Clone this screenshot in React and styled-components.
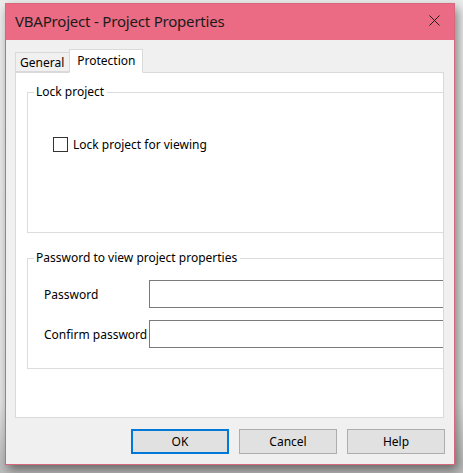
import styled, { createGlobalStyle } from 'styled-components'

const Global = createGlobalStyle`
  html, body {
    margin: 0;
    padding: 0;
    background: #e9e9e9;
    font-family: "Noto Sans", "Open Sans", sans-serif;
  }
`

const Page = styled.div`
  width: 463px;
  height: 473px;
  overflow: hidden;
  padding: 3px 0 0 5px;
  box-sizing: border-box;
  background: linear-gradient(to bottom, #ececec 0%, #e4e4e4 85%, #bcbcbc 98%);
`

const Window = styled.div`
  width: 448px;
  display: flex;
  flex-direction: column;
  background: #f0f0f0;
  border: 1px solid #d6667c;
  box-shadow: 3px 5px 10px rgba(0, 0, 0, 0.45);
`

const TitleBar = styled.div`
  height: 36px;
  background: #ea6b83;
  display: flex;
  align-items: center;
  justify-content: space-between;
  padding: 0 14px 0 9px;
`

const Title = styled.div`
  font-size: 15px;
  letter-spacing: -0.2px;
  color: #1b1b1b;
  margin-top: -3px;
`

const Close = styled.svg`
  width: 11px;
  height: 11px;
  margin-top: -4px;
`

const Body = styled.div`
  padding: 9px 10px 10px 9px;
  display: flex;
  flex-direction: column;
`

const Tabs = styled.div`
  display: flex;
  align-items: flex-end;
  height: 24px;
  margin-bottom: -1px;
  position: relative;
  z-index: 1;
`

const Tab = styled.div`
  box-sizing: border-box;
  height: ${p => (p.active ? '24px' : '20px')};
  padding: ${p => (p.active ? '2px 7px 0 7px' : '1px 5px 0 4px')};
  margin-bottom: ${p => (p.active ? '0' : '1px')};
  font-size: 12px;
  color: #000;
  background: ${p => (p.active ? '#fff' : '#f0f0f0')};
  border: 1px solid #d9d9d9;
  border-bottom: ${p => (p.active ? '1px solid #fff' : '1px solid #d9d9d9')};
  ${p => (p.active ? '' : 'border-right: none;')}
`

const Panel = styled.div`
  height: 346px;
  box-sizing: border-box;
  background: #fff;
  border: 1px solid #d9d9d9;
  padding: 11px 0 0 11px;
  overflow: hidden;
  display: flex;
  flex-direction: column;
  gap: 17px;
`

const Group = styled.fieldset`
  margin: 0 -20px 0 0;
  padding: 0 6px;
  border: 1px solid #dcdcdc;
  height: ${p => p.h}px;
  box-sizing: border-box;
  min-width: 0;
`

const Legend = styled.legend`
  padding: 0 3px 0 2px;
  font-size: 12px;
  line-height: 16px;
  color: #000;
`

const CheckRow = styled.label`
  display: flex;
  align-items: center;
  gap: 5px;
  margin: 36px 0 0 19px;
  font-size: 12px;
  color: #000;
`

const Box = styled.span`
  width: 13px;
  height: 13px;
  border: 1px solid #333;
  background: #fff;
  flex: none;
`

const Fields = styled.div`
  display: flex;
  flex-direction: column;
  gap: 12px;
  margin: 14px 0 0 0;
`

const Row = styled.div`
  display: flex;
  align-items: center;
`

const Label = styled.div`
  width: 105px;
  padding-left: 10px;
  font-size: 12px;
  color: #000;
  white-space: nowrap;
`

const Input = styled.div`
  flex: 1;
  height: 28px;
  box-sizing: border-box;
  border: 1px solid #7a7a7a;
  background: #fff;
`

const Buttons = styled.div`
  display: flex;
  justify-content: flex-end;
  gap: 10px;
  margin-top: 11px;
  margin-right: -1px;
`

const Button = styled.div`
  width: 98px;
  height: 25px;
  box-sizing: border-box;
  display: flex;
  align-items: center;
  justify-content: center;
  font-size: 12px;
  color: #000;
  background: #e1e1e1;
  border: ${p => (p.primary ? '2px solid #0078d7' : '1px solid #adadad')};
`

export default function App() {
  return (
    <Page>
      <Global />
      <Window>
        <TitleBar>
          <Title>VBAProject - Project Properties</Title>
          <Close viewBox="0 0 11 11">
            <path d="M0.5 0.5 L10.5 10.5 M10.5 0.5 L0.5 10.5" stroke="#1b1b1b" strokeWidth="1" fill="none" />
          </Close>
        </TitleBar>
        <Body>
          <Tabs>
            <Tab>General</Tab>
            <Tab active>Protection</Tab>
          </Tabs>
          <Panel>
            <Group h={149}>
              <Legend>Lock project</Legend>
              <CheckRow>
                <Box />
                Lock project for viewing
              </CheckRow>
            </Group>
            <Group h={119}>
              <Legend>Password to view project properties</Legend>
              <Fields>
                <Row>
                  <Label>Password</Label>
                  <Input />
                </Row>
                <Row>
                  <Label>Confirm password</Label>
                  <Input />
                </Row>
              </Fields>
            </Group>
          </Panel>
          <Buttons>
            <Button primary>OK</Button>
            <Button>Cancel</Button>
            <Button>Help</Button>
          </Buttons>
        </Body>
      </Window>
    </Page>
  )
}
